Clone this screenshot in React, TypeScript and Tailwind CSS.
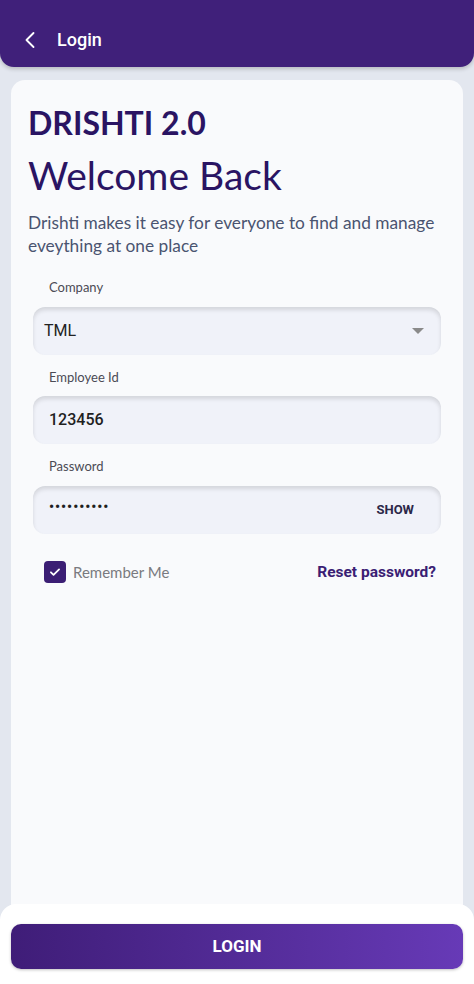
import { ChevronLeft } from "lucide-react";

const display = "font-['Lato','Noto_Sans',sans-serif]";
const roboto = "font-['Roboto','Liberation_Sans',sans-serif]";

function Field({ label, children }: { label: string; children: React.ReactNode }) {
  return (
    <div className="flex flex-col">
      <span className={`${display} ml-[38px] text-[13px] text-[#4b4b55]`}>{label}</span>
      <div className="mx-[22px] mt-[9px] flex h-[48px] items-center rounded-[12px] bg-[#f0f2f9] shadow-[inset_0_3px_4px_rgba(0,0,0,0.12)]">
        {children}
      </div>
    </div>
  );
}

export default function App() {
  return (
    <div className="flex h-[984px] w-full flex-col overflow-hidden bg-[#e3e7ef]">
      <header className="flex h-[67px] shrink-0 items-center rounded-b-[14px] bg-[#40207a] pt-[12px] shadow-[0_2px_4px_rgba(0,0,0,0.2)]">
        <ChevronLeft className="ml-[16px] h-7 w-7 text-white" strokeWidth={1.6} />
        <span className={`${roboto} ml-[13px] text-[18px] font-medium text-white`}>Login</span>
      </header>

      <main className="mx-[11px] mt-[13px] flex flex-1 flex-col rounded-t-[14px] bg-[#f9fafc]">
        <div className="px-[17px] pt-[23px]">
          <h1 className={`${display} text-[32px] font-bold leading-[40px] text-[#2a1463]`}>DRISHTI 2.0</h1>
          <h2 className={`${display} mt-[10px] text-[39px] leading-[44px] text-[#2a1463]`}>Welcome Back</h2>
          <p className={`${display} mt-[14px] text-[17.3px] leading-[23px] text-[#4a5470]`}>
            Drishti makes it easy for everyone to find and manage eveything at one place
          </p>
        </div>

        <div className="mt-[21px] flex flex-col gap-[13px]">
          <Field label="Company">
            <span className={`${roboto} ml-[11px] flex-1 text-[16px] text-[#222]`}>TML</span>
            <svg className="mr-[17px]" width="12" height="6" viewBox="0 0 12 6">
              <path d="M0 0h12L6 6z" fill="#8a8a8a" />
            </svg>
          </Field>
          <Field label="Employee Id">
            <span className={`${roboto} ml-[16px] text-[16px] font-medium text-[#1f1f1f]`}>123456</span>
          </Field>
          <Field label="Password">
            <span className={`${roboto} mb-[4px] ml-[16px] flex-1 text-[14px] font-bold tracking-[1px] text-[#1f1f1f]`}>
              ••••••••••
            </span>
            <span className={`${roboto} mr-[27px] text-[13px] font-bold text-[#2b2748]`}>SHOW</span>
          </Field>
        </div>

        <div className="mt-[27px] flex items-center justify-between pl-[33px] pr-[27px]">
          <div className="flex items-center">
            <span className="flex h-[22px] w-[22px] items-center justify-center rounded-[4px] bg-[#3b1e74]">
              <svg width="14" height="14" viewBox="0 0 24 24" fill="none" stroke="white" strokeWidth="3" strokeLinecap="round" strokeLinejoin="round">
                <path d="M5 12.5l4.5 4.5L19 7.5" />
              </svg>
            </span>
            <span className={`${display} ml-[7px] text-[15px] text-[#7a7a80]`}>Remember Me</span>
          </div>
          <span className={`${roboto} text-[15.5px] font-bold text-[#3b1e74]`}>Reset password?</span>
        </div>
      </main>

      <footer className="relative -mt-[80px] flex h-[80px] shrink-0 items-start rounded-t-[16px] bg-white px-[11px] pt-[20px]">
        <button className={`${roboto} h-[45px] w-full rounded-[10px] bg-gradient-to-r from-[#3f1d78] to-[#673ab7] text-[17px] font-bold text-white shadow-[0_1px_3px_rgba(0,0,0,0.25)]`}>
          LOGIN
        </button>
      </footer>
    </div>
  );
}
